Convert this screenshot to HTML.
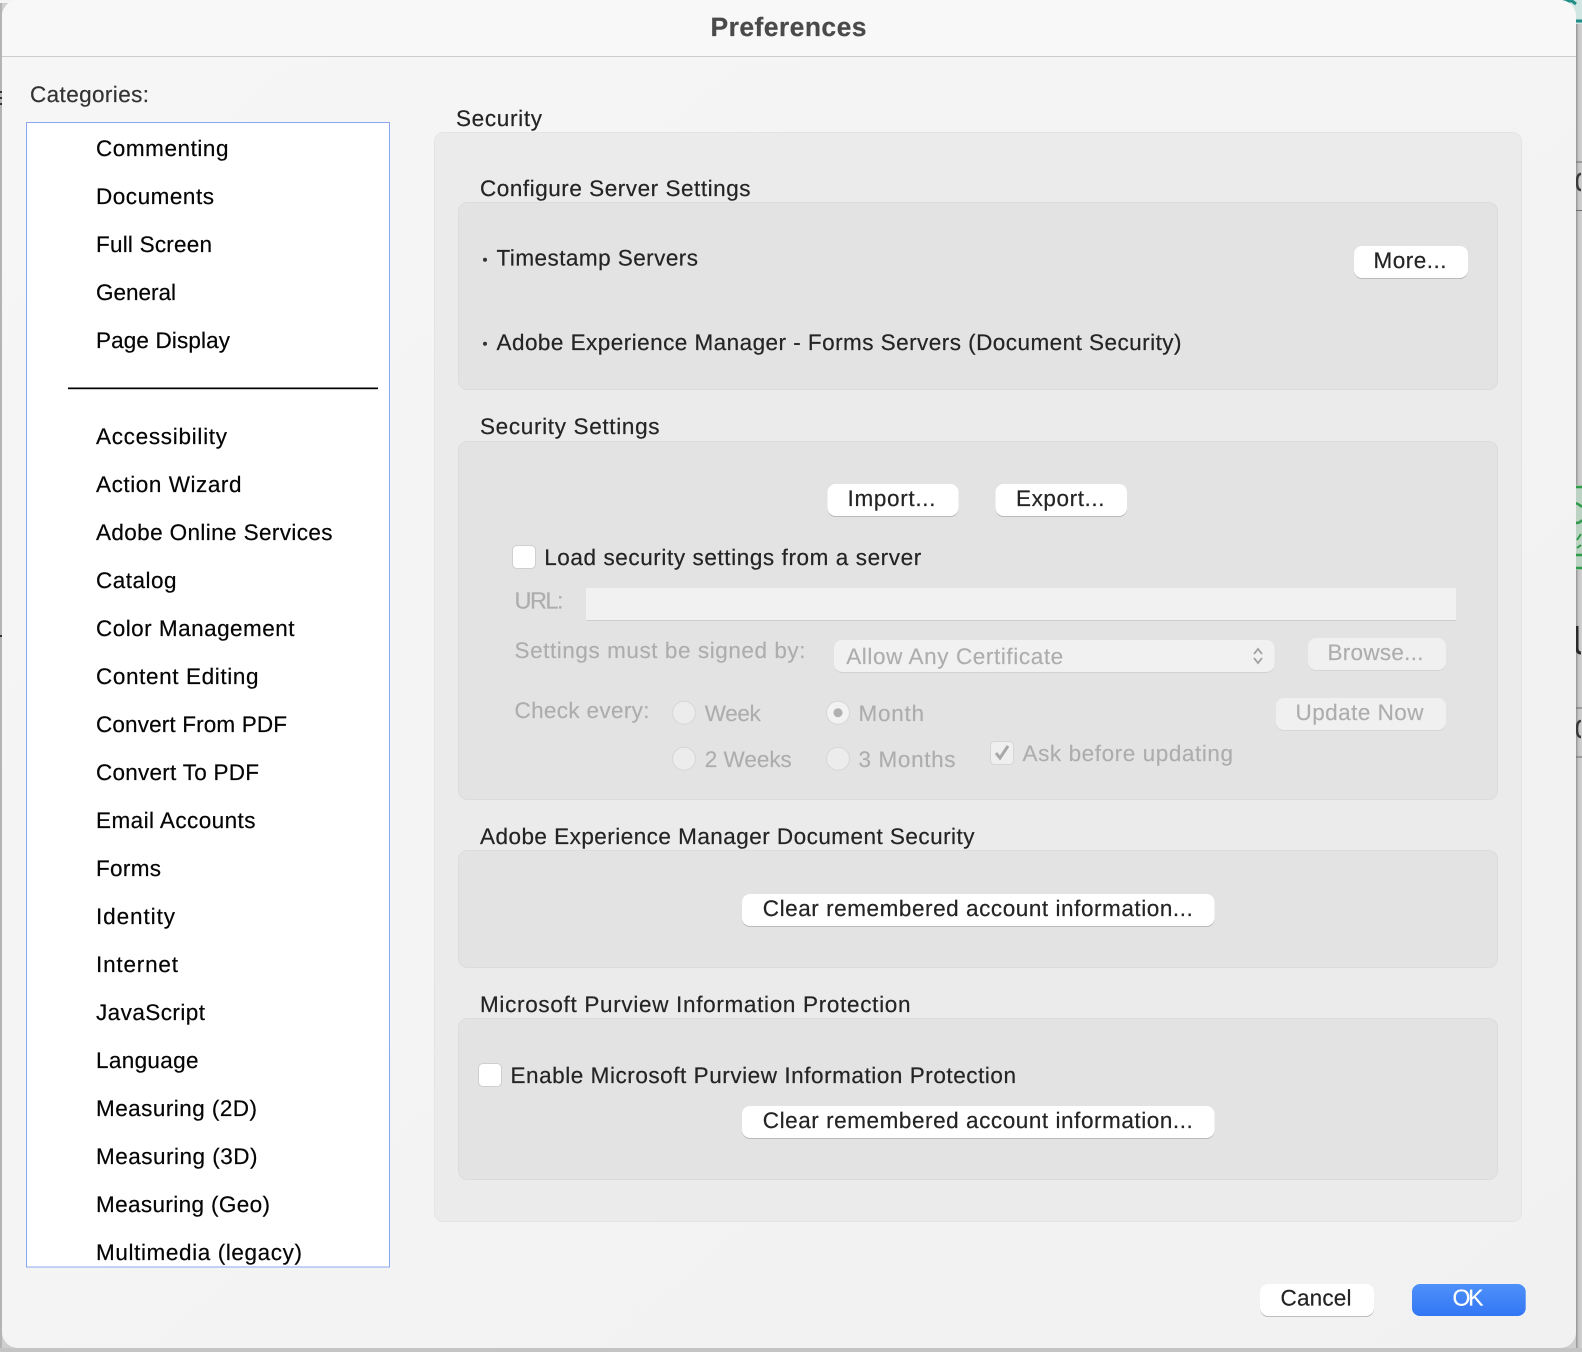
<!DOCTYPE html>
<html><head><meta charset="utf-8"><title>Preferences</title>
<style>
html,body{margin:0;padding:0;background:#cfcfcf;width:1582px;height:1352px;overflow:hidden}
svg{display:block}
text{font-family:"Liberation Sans",sans-serif;font-size:22.5px;fill:#242424;stroke:#242424;stroke-width:.2px;text-rendering:geometricPrecision}
.l text{fill:#050505;stroke:#050505}
.d text{fill:#adadad;stroke:#adadad;stroke-width:.15px}
</style></head><body>
<svg width="1582" height="1352" viewBox="0 0 1582 1352" xmlns="http://www.w3.org/2000/svg">
<defs>
<linearGradient id="wb" x1="0" y1="0" x2="1" y2="1"><stop offset="0" stop-color="#f6f6f6"/><stop offset="1" stop-color="#f1f1f1"/></linearGradient>
<linearGradient id="ok" x1="0" y1="0" x2="0" y2="1"><stop offset="0" stop-color="#4f91f9"/><stop offset="1" stop-color="#3276f5"/></linearGradient>
<linearGradient id="sr" x1="0" y1="0" x2="1" y2="0"><stop offset="0" stop-color="#929292"/><stop offset=".4" stop-color="#c4c4c4"/><stop offset="1" stop-color="#d2d2d2"/></linearGradient>
<clipPath id="wc"><rect x="2" y="0" width="1574" height="1348" rx="16"/></clipPath>
</defs>
<!-- outside -->
<rect x="0" y="0" width="1582" height="1352" fill="#cfcfcf"/>
<rect x="1576" y="0" width="6" height="1352" fill="url(#sr)"/>
<rect x="0" y="0" width="2" height="1352" fill="#b4b4b4"/>
<rect x="0" y="1348" width="1582" height="4" fill="#c4c4c4"/>
<rect x="0" y="0" width="1582" height="3" fill="#f4f4f4"/>
<path d="M1556 0h26v24h-6q0-20-20-24z" fill="#cfe6e2"/>
<path d="M1554 1h18l4 3M1572 21h10" stroke="#1f8f88" stroke-width="3" fill="none"/>
<rect x="1576" y="485" width="6" height="85" fill="#bcd2c2"/>
<path d="M1576 487h6M1576 503q4 2 6 4M1576 523q4 0 6-3M1576 555h6M1576 568h6" stroke="#2f9a4a" stroke-width="2.500" fill="none"/>
<path d="M1577 540l4-6M1577 548l4-3" stroke="#2f9a4a" stroke-width="2" fill="none"/>
<path d="M1576 162h6M1576 210.500h6M1576 708h6M1576 757h6" stroke="#6a6a6a" stroke-width="1"/>
<path d="M1581 174q-4 0-4 8t4 8M1581 721q-4 0-4 8t4 8" stroke="#3a3a3a" stroke-width="2.500" fill="none"/>
<path d="M1577 626v22q0 5 4 5" stroke="#2a2a2a" stroke-width="3" fill="none"/>
<path d="M0 92h2M0 98h2M0 104h2M0 636h2" stroke="#333" stroke-width="2"/>
<!-- window -->
<g clip-path="url(#wc)">
<rect x="2" y="0" width="1574" height="1348" fill="url(#wb)"/>
<rect x="2" y="0" width="1574" height="56" fill="#f8f8f8"/>
<rect x="2" y="56" width="1574" height="1" fill="#cdcdcd"/>
</g>
<text x="710.500" y="36" textLength="156" style="font-size:26.500px;font-weight:700;fill:#4a4a4a;stroke:#4a4a4a">Preferences</text>
<text x="30" y="102.200" textLength="119" style="fill:#333;stroke:#333">Categories:</text>
<!-- list -->
<rect x="26.500" y="122.500" width="363" height="1144.500" fill="#fff" stroke="#8ba9ee" stroke-width="1"/>
<g class="l">
<text x="96" y="156" textLength="132.500">Commenting</text>
<text x="96" y="204" textLength="118">Documents</text>
<text x="96" y="252" textLength="116">Full Screen</text>
<text x="96" y="300" textLength="80">General</text>
<text x="96" y="348" textLength="134">Page Display</text>
<text x="96" y="444" textLength="131">Accessibility</text>
<text x="96" y="492" textLength="145.500">Action Wizard</text>
<text x="96" y="540" textLength="236.500">Adobe Online Services</text>
<text x="96" y="588" textLength="80.500">Catalog</text>
<text x="96" y="636" textLength="198.500">Color Management</text>
<text x="96" y="684" textLength="162.500">Content Editing</text>
<text x="96" y="732" textLength="191">Convert From PDF</text>
<text x="96" y="780" textLength="163">Convert To PDF</text>
<text x="96" y="828" textLength="159.500">Email Accounts</text>
<text x="96" y="876" textLength="65">Forms</text>
<text x="96" y="924" textLength="79">Identity</text>
<text x="96" y="972" textLength="82">Internet</text>
<text x="96" y="1020" textLength="109">JavaScript</text>
<text x="96" y="1068" textLength="102.500">Language</text>
<text x="96" y="1116" textLength="161">Measuring (2D)</text>
<text x="96" y="1164" textLength="161.500">Measuring (3D)</text>
<text x="96" y="1212" textLength="174">Measuring (Geo)</text>
<text x="96" y="1260" textLength="206">Multimedia (legacy)</text>
</g>
<rect x="68" y="387.500" width="310" height="1.700" fill="#000"/>
<!-- panels -->
<text x="456" y="126" textLength="86">Security</text>
<rect x="434.500" y="132.500" width="1087" height="1089" rx="9" fill="#ebebeb" stroke="#e4e4e4"/>
<rect x="458.500" y="202.500" width="1039" height="187" rx="9" fill="#e3e3e3" stroke="#dcdcdc"/>
<rect x="458.500" y="441.500" width="1039" height="358" rx="9" fill="#e3e3e3" stroke="#dcdcdc"/>
<rect x="458.500" y="850.500" width="1039" height="117" rx="9" fill="#e3e3e3" stroke="#dcdcdc"/>
<rect x="458.500" y="1018.500" width="1039" height="161" rx="9" fill="#e3e3e3" stroke="#dcdcdc"/>
<text x="480" y="196" textLength="270.500">Configure Server Settings</text>
<text x="480" y="434" textLength="179.500">Security Settings</text>
<text x="480" y="844" textLength="494.500">Adobe Experience Manager Document Security</text>
<text x="480" y="1012" textLength="430.500">Microsoft Purview Information Protection</text>
<circle cx="485" cy="259.700" r="2" fill="#333"/>
<circle cx="485" cy="343.700" r="2" fill="#333"/>
<text x="496.500" y="265.700" textLength="201.500">Timestamp Servers</text>
<text x="496.500" y="350" textLength="685">Adobe Experience Manager - Forms Servers (Document Security)</text>
<!-- active buttons -->
<g fill="#adadad">
<rect x="1354" y="246.800" width="114" height="32" rx="8"/>
<rect x="827.500" y="484.800" width="131" height="32" rx="8"/>
<rect x="995.500" y="484.800" width="131.500" height="32" rx="8"/>
<rect x="742" y="894.800" width="472.500" height="32" rx="8"/>
<rect x="742" y="1106.800" width="472.500" height="32" rx="8"/>
<rect x="1260" y="1284.800" width="114" height="32" rx="8"/>
</g>
<g fill="#fff">
<rect x="1354" y="246" width="114" height="32" rx="8"/>
<rect x="827.500" y="484" width="131" height="32" rx="8"/>
<rect x="995.500" y="484" width="131.500" height="32" rx="8"/>
<rect x="742" y="894" width="472.500" height="32" rx="8"/>
<rect x="742" y="1106" width="472.500" height="32" rx="8"/>
<rect x="1260" y="1284" width="114" height="32" rx="8"/>
</g>
<rect x="1412" y="1284" width="113.700" height="32" rx="8" fill="url(#ok)"/>
<text x="1373.500" y="268" textLength="73">More...</text>
<text x="847.500" y="506" textLength="88">Import...</text>
<text x="1016" y="506" textLength="88.500">Export...</text>
<text x="762.800" y="916" textLength="430">Clear remembered account information...</text>
<text x="762.800" y="1128" textLength="430">Clear remembered account information...</text>
<text x="1280.500" y="1305.700" textLength="71">Cancel</text>
<text x="1452.500" y="1305.700" textLength="31" style="font-size:23px;fill:#fff;stroke:#fff">OK</text>
<!-- checkboxes -->
<rect x="512.500" y="545.500" width="23" height="23" rx="4.500" fill="#fff" stroke="#cfcfcf"/>
<rect x="478.500" y="1063.500" width="23" height="23" rx="4.500" fill="#fff" stroke="#cfcfcf"/>
<text x="544.200" y="565" textLength="377">Load security settings from a server</text>
<text x="510.500" y="1083" textLength="505.500">Enable Microsoft Purview Information Protection</text>
<!-- disabled -->
<rect x="586" y="588" width="870" height="32" fill="#f1f1f1"/>
<rect x="586" y="620" width="870" height="1" fill="#cfcfcf"/>
<rect x="834" y="640.800" width="440.500" height="32" rx="8" fill="#cdcdcd"/>
<rect x="834" y="640" width="440.500" height="32" rx="8" fill="#f1f1f1"/>
<rect x="1308" y="638.700" width="138" height="32" rx="8" fill="#d2d2d2"/>
<rect x="1308" y="638" width="138" height="32" rx="8" fill="#f0f0f0"/>
<rect x="1276" y="698.700" width="170" height="32" rx="8" fill="#d2d2d2"/>
<rect x="1276" y="698" width="170" height="32" rx="8" fill="#f0f0f0"/>
<path d="M1254 654l4-5 4 5M1254 658l4 5 4-5" stroke="#a0a0a0" stroke-width="1.800" fill="none"/>
<g fill="#ececec" stroke="#d6d6d6">
<circle cx="684" cy="712.700" r="11.500"/>
<circle cx="838" cy="712.700" r="11.500" fill="#f2f2f2"/>
<circle cx="684" cy="758.700" r="11.500"/>
<circle cx="838" cy="758.700" r="11.500"/>
<rect x="990.500" y="741.500" width="23" height="23" rx="4" fill="#efefef"/>
</g>
<circle cx="838" cy="712.700" r="4.500" fill="#b0b0b0"/>
<path d="M996 753l4 5 8-12" stroke="#a8a8a8" stroke-width="3" fill="none"/>
<g class="d">
<text x="514.500" y="608.300" textLength="49" style="font-size:23.500px">URL:</text>
<text x="514.500" y="658" textLength="291">Settings must be signed by:</text>
<text x="846.200" y="664" textLength="217">Allow Any Certificate</text>
<text x="1327.500" y="660" textLength="96">Browse...</text>
<text x="1295.500" y="720" textLength="128">Update Now</text>
<text x="514.500" y="718" textLength="135">Check every:</text>
<text x="704.800" y="721" textLength="56">Week</text>
<text x="858.500" y="721" textLength="65.500">Month</text>
<text x="704.800" y="767" textLength="87">2 Weeks</text>
<text x="858.500" y="767" textLength="97">3 Months</text>
<text x="1022.500" y="761" textLength="210.500">Ask before updating</text>
</g>
</svg>
</body></html>
